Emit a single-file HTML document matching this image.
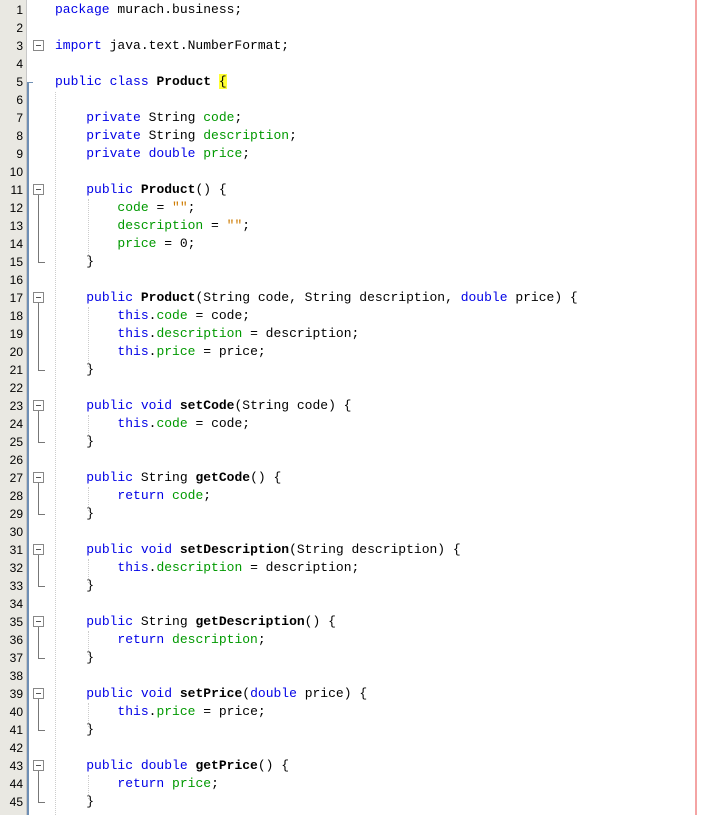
<!DOCTYPE html><html><head><style>
body{margin:0;width:705px;height:815px;background:#fff;position:relative;overflow:hidden;font-family:"Liberation Mono",monospace;font-size:13px}
#g{position:absolute;left:0;top:0;width:26px;height:815px;background:#e9e8e2;border-right:1px solid #c8c8c8}
#bb{position:absolute;left:27px;top:82px;width:2px;height:733px;background:#6f8fb4}
#rl{position:absolute;left:695px;top:0;width:2px;height:815px;background:#f4a4a4}
.n{position:absolute;left:0;width:23px;text-align:right;font-family:"Liberation Sans",sans-serif;font-size:12px;color:#000;line-height:18px}
.l{position:absolute;left:55px;white-space:pre;line-height:18px;color:#000}
.k{color:#0000e6}.f{color:#009900}.s{color:#ce7b00}b{font-weight:bold}
.fb{position:absolute;left:33px;width:11px;height:11px;border:1px solid #888;background:#fff;box-sizing:border-box}
.fb:after{content:"";position:absolute;left:2px;top:4px;width:5px;height:1px;background:#555}
.fl{position:absolute;left:38px;width:1px;background:#777}
.fe{position:absolute;left:38px;width:7px;height:1px;background:#777}
.dg{position:absolute;width:0;border-left:1px dotted #ccc}
.hl{background:#ffff33}
</style></head><body>
<div id="g"></div><div id="bb"></div><div id="rl"></div>
<div class="dg" style="left:55px;top:92px;height:723px"></div>
<div id="c"></div>
<script>
const L=[
'<span class="k">package</span> murach.business;','',
'<span class="k">import</span> java.text.NumberFormat;','',
'<span class="k">public class</span> <b>Product</b> <span class="hl">{</span>','',
'    <span class="k">private</span> String <span class="f">code</span>;',
'    <span class="k">private</span> String <span class="f">description</span>;',
'    <span class="k">private double</span> <span class="f">price</span>;','',
'    <span class="k">public</span> <b>Product</b>() {',
'        <span class="f">code</span> = <span class="s">""</span>;',
'        <span class="f">description</span> = <span class="s">""</span>;',
'        <span class="f">price</span> = 0;','    }','',
'    <span class="k">public</span> <b>Product</b>(String code, String description, <span class="k">double</span> price) {',
'        <span class="k">this</span>.<span class="f">code</span> = code;',
'        <span class="k">this</span>.<span class="f">description</span> = description;',
'        <span class="k">this</span>.<span class="f">price</span> = price;','    }','',
'    <span class="k">public void</span> <b>setCode</b>(String code) {',
'        <span class="k">this</span>.<span class="f">code</span> = code;','    }','',
'    <span class="k">public</span> String <b>getCode</b>() {',
'        <span class="k">return</span> <span class="f">code</span>;','    }','',
'    <span class="k">public void</span> <b>setDescription</b>(String description) {',
'        <span class="k">this</span>.<span class="f">description</span> = description;','    }','',
'    <span class="k">public</span> String <b>getDescription</b>() {',
'        <span class="k">return</span> <span class="f">description</span>;','    }','',
'    <span class="k">public void</span> <b>setPrice</b>(<span class="k">double</span> price) {',
'        <span class="k">this</span>.<span class="f">price</span> = price;','    }','',
'    <span class="k">public double</span> <b>getPrice</b>() {',
'        <span class="k">return</span> <span class="f">price</span>;','    }'];
let h='';
L.forEach((t,i)=>{const y=1+18*i;h+=`<div class="n" style="top:${y}px">${i+1}</div><div class="l" style="top:${y}px">${t}</div>`;});
const F=[[11,15],[17,21],[23,25],[27,29],[31,33],[35,37],[39,41],[43,45]];
F.forEach(([a,b])=>{const y=1+18*(a-1)+3;const ye=1+18*(b-1)+9;
h+=`<div class="fl" style="top:${y+11}px;height:${ye-y-11}px"></div><div class="fe" style="top:${ye}px"></div><div class="fb" style="top:${y}px"></div>`;
h+=`<div class="dg" style="left:88px;top:${y+15}px;height:${ye-y-18}px"></div>`;});
h+=`<div class="fb" style="top:40px"></div>`;
h+=`<div style="position:absolute;left:29px;top:82px;width:4px;height:1px;background:#6f8fb4"></div>`;
document.getElementById('c').innerHTML=h;
</script>
</body></html>
